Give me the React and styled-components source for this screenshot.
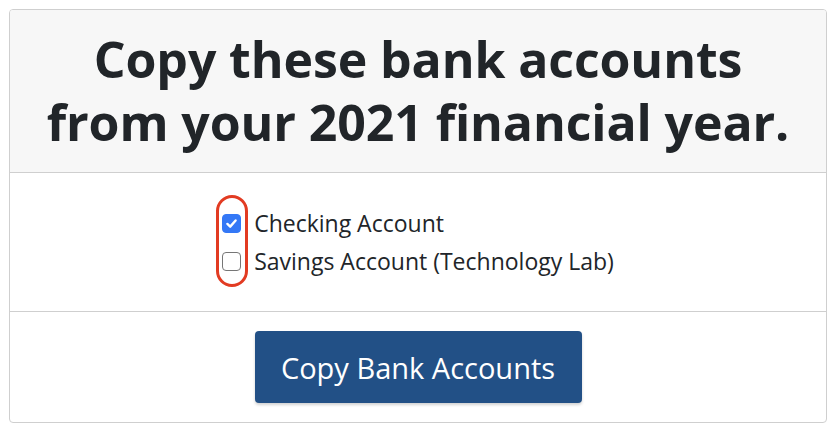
import React, { useState } from 'react';
import styled, { createGlobalStyle } from 'styled-components';

const GlobalStyle = createGlobalStyle`
  html, body {
    margin: 0;
    padding: 0;
    background: #ffffff;
  }
  body {
    font-family: 'Open Sans', 'Liberation Sans', sans-serif;
    color: #212529;
  }
`;

const Page = styled.div`
  padding: 9px 9px 0 9px;
  width: 818px;
`;

const Card = styled.div`
  border: 1px solid #cfcfcf;
  border-radius: 4px;
  overflow: hidden;
  background: #fff;
`;

const Header = styled.div`
  background: #f7f7f7;
  border-bottom: 1px solid #cfcfcf;
  height: 162px;
  display: flex;
  align-items: center;
  justify-content: center;
`;

const Title = styled.h1`
  margin: 0;
  font-size: 50px;
  font-weight: 700;
  line-height: 63px;
  text-align: center;
  color: #212529;
  letter-spacing: -0.1px;
`;

const Body = styled.div`
  height: 138px;
  border-bottom: 1px solid #cfcfcf;
  display: flex;
  align-items: center;
  justify-content: center;
`;

const List = styled.div`
  position: relative;
  display: flex;
  flex-direction: column;
`;

const Row = styled.label`
  display: flex;
  align-items: center;
  gap: 13px;
  height: 38px;
  font-size: 23px;
  color: #212529;
  cursor: pointer;
`;

const Box = styled.span`
  width: 19px;
  height: 19px;
  box-sizing: border-box;
  border-radius: 4px;
  border: 1px solid ${(p) => (p.$checked ? '#3478f6' : '#767676')};
  background: ${(p) => (p.$checked ? '#3478f6' : '#fff')};
  display: flex;
  align-items: center;
  justify-content: center;
  flex-shrink: 0;
`;

const Highlight = styled.div`
  position: absolute;
  left: -6px;
  top: -9px;
  width: 26px;
  height: 86px;
  border: 3px solid #e23b22;
  border-radius: 16px;
  pointer-events: none;
`;

const Footer = styled.div`
  height: 110px;
  display: flex;
  align-items: center;
  justify-content: center;
`;

const Button = styled.button`
  width: 327px;
  height: 72px;
  background: #225086;
  color: #fff;
  border: none;
  border-radius: 4px;
  box-shadow: 0 2px 3px rgba(0, 0, 0, 0.18);
  font-family: 'Open Sans', 'Liberation Sans', sans-serif;
  font-size: 29px;
  cursor: pointer;
`;

const accounts = [
  { id: 'checking', label: 'Checking Account', checked: true },
  { id: 'savings', label: 'Savings Account (Technology Lab)', checked: false },
];

function Check({ checked }) {
  return (
    <Box $checked={checked}>
      {checked && (
        <svg width="13" height="13" viewBox="0 0 12 12">
          <path
            d="M2.2 6.4 L4.8 8.9 L9.8 3.2"
            fill="none"
            stroke="#fff"
            strokeWidth="2.2"
            strokeLinecap="round"
            strokeLinejoin="round"
          />
        </svg>
      )}
    </Box>
  );
}

export default function App() {
  const [state, setState] = useState(
    Object.fromEntries(accounts.map((a) => [a.id, a.checked]))
  );

  return (
    <>
      <GlobalStyle />
      <Page>
        <Card>
          <Header>
            <Title>
              Copy these bank accounts
              <br />
              from your 2021 financial year.
            </Title>
          </Header>
          <Body>
            <List>
              {accounts.map((a) => (
                <Row
                  key={a.id}
                  onClick={() => setState((s) => ({ ...s, [a.id]: !s[a.id] }))}
                >
                  <Check checked={state[a.id]} />
                  {a.label}
                </Row>
              ))}
              <Highlight />
            </List>
          </Body>
          <Footer>
            <Button>Copy Bank Accounts</Button>
          </Footer>
        </Card>
      </Page>
    </>
  );
}
